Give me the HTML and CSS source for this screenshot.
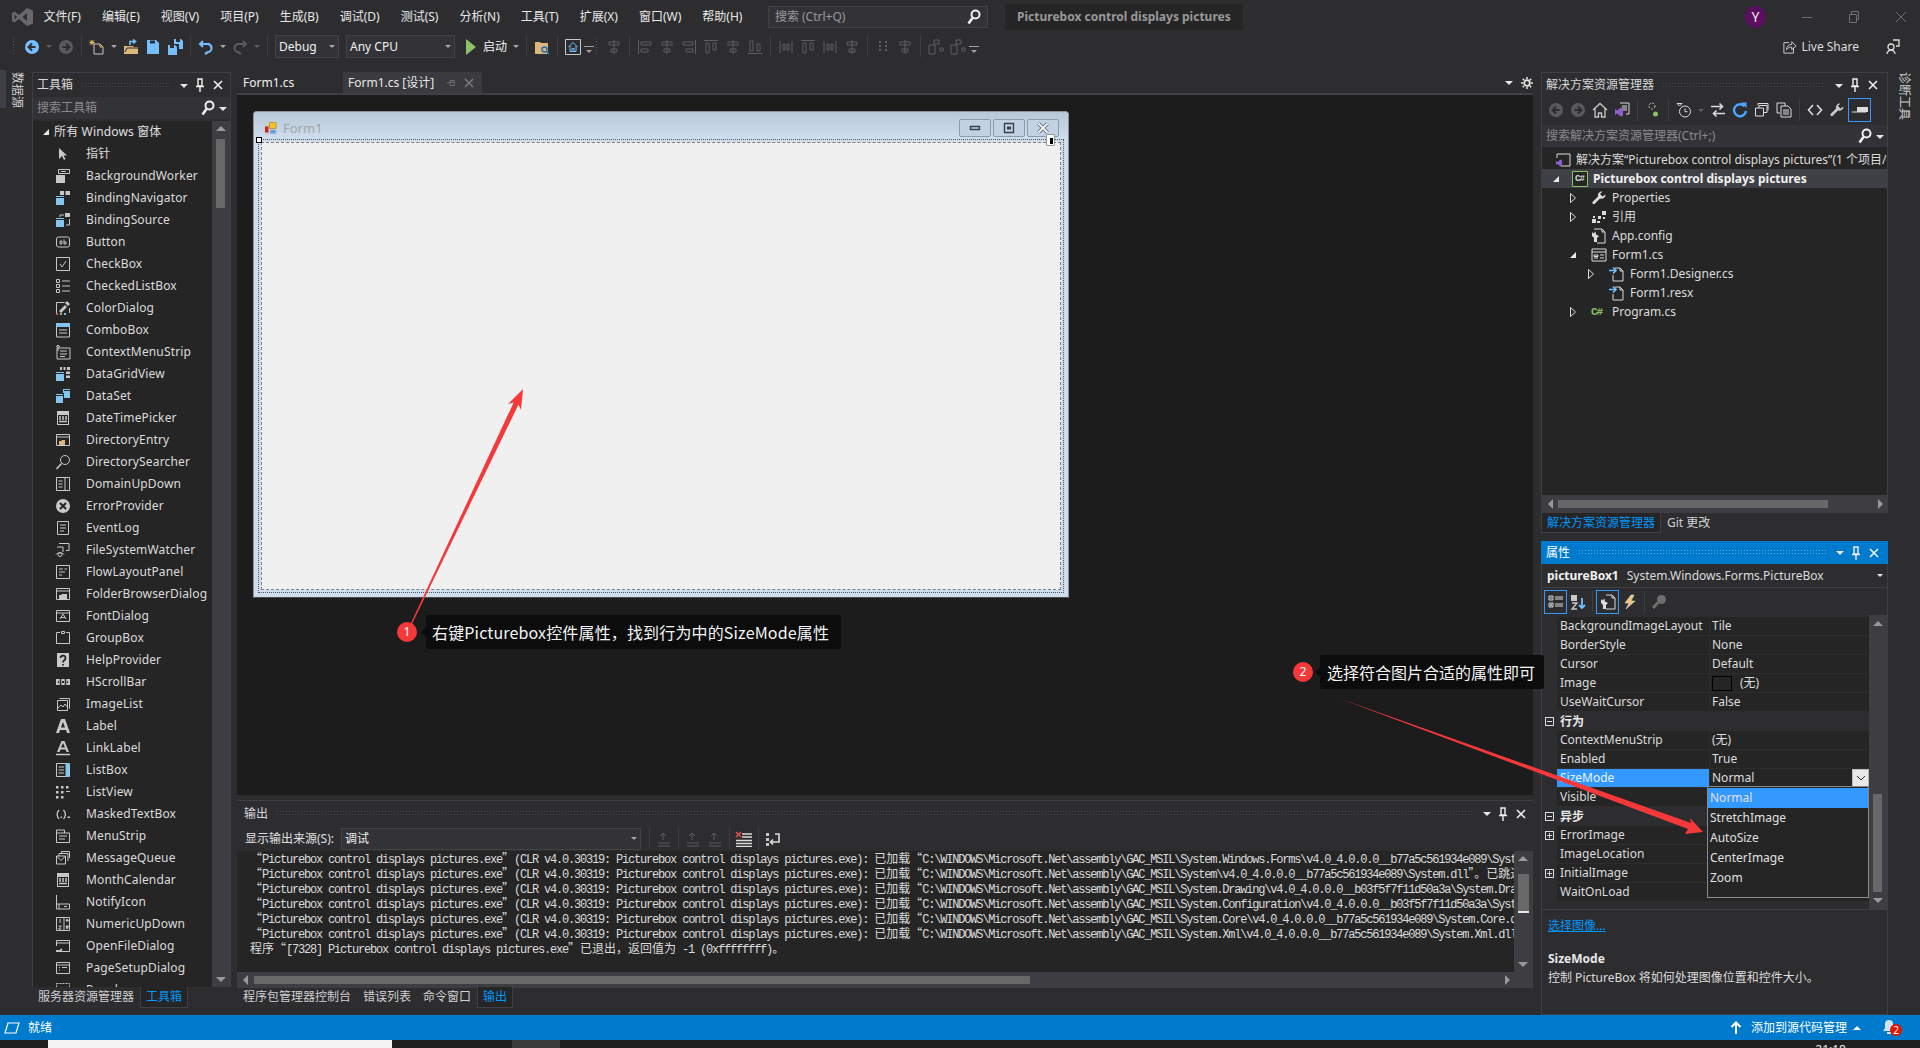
FILE: index.html
```html
<!DOCTYPE html>
<html lang="zh-CN">
<head>
  <meta charset="UTF-8"/>
  <title>Picturebox control displays pictures</title>
  <link rel="stylesheet" href="styles.css">
</head>
<body>
  <svg class="sprites" width="0" height="0">
    <!-- toolbar -->
    <symbol id="back" viewBox="0 0 16 16"><circle cx="8" cy="8" r="7" fill="currentColor" stroke="none"/><path d="M11.500 8H5M8 4.500 4.500 8 8 11.500" stroke="#2d2d30" stroke-width="2"/></symbol>
    <symbol id="fwd" viewBox="0 0 16 16"><circle cx="8" cy="8" r="7" fill="currentColor" stroke="none"/><path d="M4.500 8H11M8 4.500 11.500 8 8 11.500" stroke="#2d2d30" stroke-width="2"/></symbol>
    <symbol id="newp" viewBox="0 0 16 16"><path d="M5 5h6l3 3v7H5z"/><path d="M11 5v3h3M3 1v5M.5 3.500h5M1 1.500l4 4M5 1.500l-4 4" stroke="#e8c060" stroke-width="1"/></symbol>
    <symbol id="open" viewBox="0 0 16 16"><path d="M1 7h9l1 1h4v7H1z" fill="#dcb67a" stroke="none"/><path d="M2 13l2-4h11" stroke="#2d2d30"/><path d="M7 6V2.500h5M10 .5l2.500 2L10 4.500" stroke="#75bfff" stroke-width="1.600"/></symbol>
    <symbol id="save" viewBox="0 0 16 16"><path d="M2 1h9v4H5V1 1h6l3 3v11H2z" fill="#75bfff" stroke="none"/><path d="M5 1.500h5v3H5z" fill="#2d2d30" stroke="none"/></symbol>
    <symbol id="saveall" viewBox="0 0 16 16"><path d="M7 0h7l2 2v8h-4V5H7z" fill="#75bfff" stroke="none"/><path d="M1 6h7l2 2v8H1z" fill="#75bfff" stroke="none"/><path d="M3 6h4v3H3zM9 0h4v3H9z" fill="#2d2d30" stroke="none"/></symbol>
    <symbol id="undo" viewBox="0 0 16 16"><path d="M5 2l-3 3 3 3" stroke="currentColor" stroke-width="2"/><path d="M2.500 5H9a4 4 0 0 1 1 8l-3 2" stroke="currentColor" stroke-width="2.200"/></symbol>
    <symbol id="redo" viewBox="0 0 16 16"><path d="M11 2l3 3-3 3" stroke="currentColor" stroke-width="2"/><path d="M13.500 5H7a4 4 0 0 0-1 8l3 2" stroke="currentColor" stroke-width="2.200"/></symbol>
    <symbol id="play" viewBox="0 0 16 16"><path d="M3 0l10 8-10 8z" fill="currentColor" stroke="none"/></symbol>
    <symbol id="findf" viewBox="0 0 16 16"><path d="M1 3h5l1 1h7v11H1z" fill="#dcb67a" stroke="none"/><circle cx="10.500" cy="10.500" r="2.500" stroke="#1b6fb5" stroke-width="1.400"/><path d="M12.500 12.500 15 15" stroke="#1b6fb5" stroke-width="1.500"/></symbol>
    <symbol id="homeb" viewBox="0 0 16 16"><path d="M.5.5h15v15H.5z" stroke="#c8c8c8"/><path d="M3.500 8 8 3.500 12.500 8M5 7v5.500h6V7M7 12.500V9.500h2v3" stroke="#75bfff"/></symbol>
    <symbol id="alignl" viewBox="0 0 16 16"><path d="M1.500 1v14M4 3h10v3H4zM4 10h7v3H4z"/></symbol>
    <symbol id="alignc" viewBox="0 0 16 16"><path d="M8 1v14M3 3h10v3H3zM5 10h6v3H5z"/></symbol>
    <symbol id="alignt" viewBox="0 0 16 16"><path d="M1 1.500h14M3 4v10h3V4zM10 4v7h3V4z"/></symbol>
    <symbol id="spacer" viewBox="0 0 16 16"><path d="M2 2v12M14 2v12M5 5h2v6H5zM9 5h2v6H9z"/></symbol>
    <symbol id="vdots" viewBox="0 0 16 16"><path d="M5 2v12M11 2v12" stroke-dasharray="2 2" stroke-width="2"/></symbol>
    <symbol id="order" viewBox="0 0 16 16"><path d="M1 6h6v9H1zM6 1h5v4H6zM12 9h3v3h-3z"/></symbol>
    <!-- window / panel chrome -->
    <symbol id="pin" viewBox="0 0 10 14"><path d="M3 1h4v7H3zM1 8.500h8M5 9v5M7 1v7" stroke="currentColor" stroke-width="1.400"/></symbol>
    <symbol id="closex" viewBox="0 0 10 10"><path d="M1 1l8 8M9 1 1 9" stroke="currentColor" stroke-width="1.600"/></symbol>
    <symbol id="magn" viewBox="0 0 14 16"><circle cx="8.500" cy="5.500" r="4" stroke="currentColor" stroke-width="2"/><path d="M5.500 9 1.500 14.500" stroke="currentColor" stroke-width="2.600"/></symbol>
    <symbol id="gear" viewBox="0 0 12 12"><circle cx="6" cy="6" r="2.800" stroke="currentColor" stroke-width="1.800"/><path d="M6 0v2M6 10v2M0 6h2M10 6h2M1.800 1.800l1.400 1.400M8.800 8.800l1.400 1.400M1.800 10.200l1.400-1.400M8.800 3.200l1.400-1.400" stroke="currentColor" stroke-width="1.500"/></symbol>
    <symbol id="wrench" viewBox="0 0 16 16"><path d="M14.500 4.500a4 4 0 0 1-5.500 4L3.500 14a1.500 1.500 0 0 1-2-2L7 6.500A4 4 0 0 1 11.500 1.500L9 4l2.500 2.500z" fill="currentColor" stroke="none"/></symbol>
    <symbol id="home" viewBox="0 0 16 16"><path d="M1 8l7-6.500L15 8M3 6.500V15h3.500v-4h3v4H13V6.500" stroke="currentColor" stroke-width="1.300"/></symbol>
    <symbol id="vsfile" viewBox="0 0 16 16"><path d="M6 1h9v11h-3M8 4h5M8 6h5M8 8h5" stroke="#dcdcdc"/><path d="M1 7l2 1.500L7 5.500l2 1v7l-2 1-4-3-2 1.500z" fill="#8f5fd0" stroke="none"/></symbol>
    <symbol id="pending" viewBox="0 0 16 16"><circle cx="7" cy="4" r="3" stroke="#c8c8c8" stroke-dasharray="2 1.500"/><circle cx="10.500" cy="12" r="2.500" fill="#8cc265" stroke="none"/></symbol>
    <symbol id="clock" viewBox="0 0 16 16"><circle cx="9" cy="9.500" r="5.500" stroke="#dcdcdc"/><path d="M9 6.500v3.200h2.500M1 1.500h5L3.500 4z" stroke="#dcdcdc"/></symbol>
    <symbol id="sync" viewBox="0 0 16 16"><path d="M1 4.500h11M9.500 1.500l3 3-3 3M15 11.500H4M6.500 8.500l-3 3 3 3" stroke="#dcdcdc" stroke-width="1.600"/></symbol>
    <symbol id="refresh" viewBox="0 0 16 16"><path d="M12.500 4.200A6 6 0 1 0 14 9" stroke="#4da6ff" stroke-width="2.400"/><path d="M9 .5h5.500V6z" fill="#4da6ff" stroke="none"/></symbol>
    <symbol id="copies" viewBox="0 0 16 16"><path d="M1.500 6h8v8h-8zM5 6V3.500h8v7h-3.500M4 3.500V1.500h10v7" stroke="#dcdcdc"/></symbol>
    <symbol id="pages" viewBox="0 0 16 16"><path d="M1 1h8v3M1 1v10h3M5 4h7l3 3v8H5zM7 8h6M7 10h6M7 12h6" stroke="#dcdcdc"/></symbol>
    <symbol id="code" viewBox="0 0 16 16"><path d="M6 3 1.500 8 6 13M10 3l4.500 5L10 13" stroke="#dcdcdc" stroke-width="1.600"/></symbol>
    <symbol id="collapse" viewBox="0 0 16 16"><path d="M0 10h14" stroke="#dcdcdc" stroke-width="1"/><path d="M5 5h11v5H5z" fill="#dcdcdc" stroke="none"/></symbol>
    <symbol id="tri-r" viewBox="0 0 6 10"><path d="M.5.5l5 4.500-5 4.500z" stroke="#dcdcdc"/></symbol>
    <symbol id="slnfile" viewBox="0 0 16 16"><path d="M2 2h13v12H6M2 2v4" stroke="#dcdcdc"/><path d="M1 9l1.500 1 3-2.500 1.500.7v5.600l-1.500.7-3-2.500-1.500 1z" fill="#8f5fd0" stroke="none"/></symbol>
    <symbol id="csproj" viewBox="0 0 16 16"><path d="M.5.5h15v15H.5z" stroke="#8cc265" fill="#252526"/></symbol>
    <symbol id="refs" viewBox="0 0 16 16"><path d="M1 10h4v4H1zM7 7h3v3H7zM11 2h4v4h-4zM6 12h3v2H6zM2 7h2v2H2zM12 8h2v2h-2z" fill="#dcdcdc" stroke="none"/></symbol>
    <symbol id="config" viewBox="0 0 16 16"><path d="M3 1h8l3 3v11H6M11 1v3h3" stroke="#dcdcdc"/><path d="M1 4l1.500 1.500L4.500 3.500 5 6.500 8 8 6 10v4H3v-4L1 8z" fill="#dcdcdc" stroke="none"/></symbol>
    <symbol id="formf" viewBox="0 0 16 16"><path d="M1 2h14v12H1zM1 5h14M3 8h4v1.500H3zM3 11h4M9 8h4M9 11h4" stroke="#dcdcdc"/></symbol>
    <symbol id="dep" viewBox="0 0 16 16"><path d="M6 2h5l3 3v10H4V9M11 2v3h3" stroke="#dcdcdc"/><path d="M0 4.500h6M4 1.500l3 3-3 3" stroke="#75bfff" stroke-width="1.600"/></symbol>
    <symbol id="cat" viewBox="0 0 16 16"><path d="M1 2h4v4H1zM1 9h4v4H1zM7 3h8M7 5h8M7 10h8M7 12h8M2 4h2M2 11h2M3 10v2" stroke="#dcdcdc"/></symbol>
    <symbol id="az" viewBox="0 0 16 16"><path d="M1 1h6v6H1z" fill="#c8c8c8" stroke="none"/><path d="M2 9h5l-5 6h5" stroke="#c8c8c8" stroke-width="1.400"/><path d="M12 4v10M9 11l3 3 3-3" stroke="#75bfff" stroke-width="1.800"/></symbol>
    <symbol id="propf" viewBox="0 0 16 16"><path d="M6 1h6l3 3v11H6M12 1v3h3" stroke="#dcdcdc"/><path d="M1 5l1.500 1.500 2-2L5 7.500 8 9 6 11v4H3v-4L1 9z" fill="#dcdcdc" stroke="none"/></symbol>
    <symbol id="bolt" viewBox="0 0 16 16"><path d="M9 1 3 9h4l-3 6 9-8H9l3-6z" fill="#f2c27b" stroke="#dcdcdc" stroke-width=".6"/></symbol>
    <symbol id="key" viewBox="0 0 16 16"><circle cx="10.500" cy="5.500" r="4.500" fill="#6e6e6e" stroke="none"/><path d="M7.500 8 2 14" stroke="#6e6e6e" stroke-width="3"/></symbol>
    <symbol id="livesh" viewBox="0 0 16 16"><path d="M1 3h6M1 3v12h11V9" stroke="currentColor"/><path d="M4 11c0-4 3-6 6-6V2l5 5-5 4V8c-3 0-4 1-6 3z" stroke="currentColor"/></symbol>
    <symbol id="feedb" viewBox="0 0 16 16"><circle cx="7" cy="8" r="3" stroke="currentColor" stroke-width="1.300"/><path d="M3 15c0-2 2-4 4-4s4 2 4 4M9 1h6v6h-3" stroke="currentColor" stroke-width="1.300"/></symbol>
    <symbol id="clearout" viewBox="0 0 16 16"><path d="M6 3h10M6 6h10M0 9.500h16M0 12.500h16M0 15.500h16" stroke="#dcdcdc" stroke-width="1.500"/><path d="M0 1l5 5M5 1 0 6" stroke="#e05252" stroke-width="1.600"/></symbol>
    <symbol id="wrap" viewBox="0 0 16 16"><path d="M10 3h4v8H6M8 8.500 5.500 11 8 13.500" stroke="#dcdcdc" stroke-width="1.600"/><path d="M1 2h3v3H1zM1 7h3v3H1zM1 12h3v3H1z" fill="#c8c8c8" stroke="none"/></symbol>
    <symbol id="jump" viewBox="0 0 16 16"><path d="M2 15h12M2 12h12M7 9V2M4 5l3-3 3 3" stroke="currentColor"/></symbol>
    <!-- toolbox -->
    <symbol id="t-ptr" viewBox="0 0 16 16"><path d="M4 2v11l3-3 2 4 1.500-1-2-3.500H12z" fill="#c8c8c8" stroke="none"/></symbol>
    <symbol id="t-bgw" viewBox="0 0 16 16"><path d="M1 7h9v8H1z" fill="#c8c8c8" stroke="none"/><path d="M3.500 1.500h11v4h-11z"/><path d="M6 3.500h5"/></symbol>
    <symbol id="t-bnav" viewBox="0 0 16 16"><path d="M1 6h8v9H1z" fill="#83c5ed" stroke="none"/><path d="M1 7.500h8" stroke="#252526"/><path d="M5 1h4v4H5zM10.500 1h4.500v4h-4.500z" fill="#c8c8c8" stroke="none"/></symbol>
    <symbol id="t-bsrc" viewBox="0 0 16 16"><path d="M1 6h8v9H1z" fill="#83c5ed" stroke="none"/><path d="M1 7.500h8" stroke="#252526"/><path d="M10 1h5v4h-5z" fill="#c8c8c8" stroke="none"/><path d="M14.500 7v6H11M5 5V3h4"/></symbol>
    <symbol id="t-btn" viewBox="0 0 16 16"><rect x="1.500" y="3" width="13" height="10" rx="2"/><path d="M5 7h2v3H5zM9 5.500V10h2V8H9"/></symbol>
    <symbol id="t-chk" viewBox="0 0 16 16"><path d="M1.500 1.500h13v13h-13z"/><path d="M5 8l2 3 4-6"/></symbol>
    <symbol id="t-clb" viewBox="0 0 16 16"><path d="M1.500 1.500h3v3h-3zM1.500 6.500h3v3h-3zM1.500 11.500h3v3h-3zM7 3h8M7 8h8M7 13h8"/></symbol>
    <symbol id="t-color" viewBox="0 0 16 16"><path d="M1.500 13V2.500h8M14.500 8v5" /><path d="M4 11l6-6 2 2-6 6zM10 3l3 3 2-2-3-3z" fill="#c8c8c8" stroke="none"/><path d="M1 14h2" stroke="#e05252" stroke-width="2"/><path d="M5 14h2" stroke="#8cc265" stroke-width="2"/><path d="M9 14h2" stroke="#75bfff" stroke-width="2"/></symbol>
    <symbol id="t-combo" viewBox="0 0 16 16"><path d="M1 1h14v4H1z" fill="#83c5ed" stroke="none"/><path d="M1.500 5v10h13V5M4 8h8M4 11h8"/></symbol>
    <symbol id="t-ctx" viewBox="0 0 16 16"><path d="M2 4h13v11H2zM5 7h7M5 10h7M5 12.500h5"/><path d="M3 1v6M1 3l2-2 2 2" stroke="#c8c8c8"/></symbol>
    <symbol id="t-dgv" viewBox="0 0 16 16"><path d="M1 6h8v9H1z" fill="#83c5ed" stroke="none"/><path d="M1 7.500h8" stroke="#252526"/><path d="M5 1h2v3H5zM8.500 1h2v3h-2zM12 1h3v3h-3zM11 5.500h4V8h-4zM11 9.500h4V12h-4z" fill="#c8c8c8" stroke="none"/></symbol>
    <symbol id="t-ds" viewBox="0 0 16 16"><path d="M8 1h7v9H9V5H8z" fill="#83c5ed" stroke="none"/><path d="M1 6h7v9H1z" fill="#83c5ed" stroke="none"/><path d="M1 7.500h7M9 2.500h6" stroke="#252526"/></symbol>
    <symbol id="t-date" viewBox="0 0 16 16"><path d="M2 1h12v14H2z" stroke="none" fill="#c8c8c8"/><path d="M3 5h10v9H3z" fill="#252526" stroke="none"/><path d="M4 7h2M7 7h2M10 7h2M4 9h2M7 9h2M10 9h2M4 11.500h8" stroke-width="1.300"/></symbol>
    <symbol id="t-dir" viewBox="0 0 16 16"><path d="M1.500 2.500h13v11h-13zM1.500 5h13"/><path d="M4 9h2l1-1h3v5H4z" fill="#dcb67a" stroke="none"/></symbol>
    <symbol id="t-srch" viewBox="0 0 16 16"><circle cx="10" cy="6" r="4.500"/><path d="M6.500 9.500 1.500 15" stroke-width="1.600"/></symbol>
    <symbol id="t-dud" viewBox="0 0 16 16"><path d="M1.500 1.500h13v13h-13zM10 1.500v13"/><path d="M3.500 5h4M3.500 8h4M3.500 11h4"/></symbol>
    <symbol id="t-err" viewBox="0 0 16 16"><circle cx="8" cy="8" r="7" fill="#c8c8c8" stroke="none"/><path d="M5 5l6 6M11 5l-6 6" stroke="#252526" stroke-width="2"/></symbol>
    <symbol id="t-evt" viewBox="0 0 16 16"><path d="M2.500 1.500h11v13h-11zM5 5h6M5 8h6M5 11h4"/></symbol>
    <symbol id="t-fsw" viewBox="0 0 16 16"><path d="M4 1.500h10v7h-3M2 5h6v5"/><circle cx="5" cy="12.500" r="2" /><path d="M1 12.500c1-2 7-2 8 0" /></symbol>
    <symbol id="t-flow" viewBox="0 0 16 16"><path d="M1.500 1.500h13v13h-13zM4 5h4M9.500 5H12M4 8h6M4 11h3"/></symbol>
    <symbol id="t-fbd" viewBox="0 0 16 16"><path d="M1.500 2.500h13v11h-13zM1.500 5h13"/><path d="M4 9h2l1-1h5v5H4z" fill="#c8c8c8" stroke="none"/></symbol>
    <symbol id="t-font" viewBox="0 0 16 16"><path d="M1.500 2.500h13v11h-13zM1.500 5h13M5 11l3-5 3 5M6 9.500h4"/></symbol>
    <symbol id="t-grp" viewBox="0 0 16 16"><path d="M5 2.500H1.500v11h13v-11H11M6.500 1.500h3v2h-3z"/></symbol>
    <symbol id="t-help" viewBox="0 0 16 16"><path d="M2 1h12v14H2z" fill="#c8c8c8" stroke="none"/><path d="M5.500 6a2.500 2.500 0 1 1 3.800 2.200C8.500 8.700 8 9 8 10.500M8 12v1.500" stroke="#252526" stroke-width="1.800"/></symbol>
    <symbol id="t-hsb" viewBox="0 0 16 16"><path d="M1 5h14v6H1z" fill="#c8c8c8" stroke="none"/><path d="M5.500 5v6M10.500 5v6" stroke="#252526" stroke-width="1.500"/><path d="M4 6.500v3L2.500 8zM12 6.500v3L13.500 8zM7 7h2v2H7z" fill="#252526" stroke="none"/></symbol>
    <symbol id="t-img" viewBox="0 0 16 16"><path d="M2.500 4.500h10v10h-10zM4.500 2.500h10v10M3 12l3-3 2 2 2-3 2.500 3"/></symbol>
    <symbol id="t-lbl" viewBox="0 0 16 16"><path d="M1 15 6 1h4l5 14h-3l-1-3H5l-1 3zM6 9.500h4L8 4z" fill="#c8c8c8" stroke="none" fill-rule="evenodd"/></symbol>
    <symbol id="t-lnk" viewBox="0 0 16 16"><path d="M2 12 6.500 1h3L14 12h-2.500l-1-2.500h-5L4.500 12zM6 7.500h4L8 3z" fill="#c8c8c8" stroke="none" fill-rule="evenodd"/><path d="M1 14.500h14" stroke-width="1.500"/></symbol>
    <symbol id="t-lb" viewBox="0 0 16 16"><path d="M1.500 1.500h13v13h-13zM3.500 5H9M3.500 8H9M3.500 11H9"/><path d="M10.500 1h4v14h-4z" fill="#83c5ed" stroke="none"/></symbol>
    <symbol id="t-lv" viewBox="0 0 16 16"><path d="M1 2h2.500v2.500H1zM6 2h2.500v2.500H6zM11 2h2.500v2.500H11zM1 7h2.500v2.500H1zM6 7h2.500v2.500H6zM1 12h2.500v2.500H1zM6 12h2.500v2.500H6zM11 7h4v1h-4z" fill="#c8c8c8" stroke="none"/></symbol>
    <symbol id="t-mask" viewBox="0 0 16 16"><path d="M4 4C1.500 7 1.500 10 4 13M8.500 4c2.500 3 2.500 6 0 9" stroke-width="1.300"/><path d="M5.500 10.500h1.500V12H5.500zM12.500 10.500H15V12h-2.500z" fill="#c8c8c8" stroke="none"/></symbol>
    <symbol id="t-menu" viewBox="0 0 16 16"><path d="M1.500 2h8v3h5v9.500h-13zM1.500 5h8M4 8h8M4 11h6"/></symbol>
    <symbol id="t-msg" viewBox="0 0 16 16"><path d="M1.500 6h9v8h-9zM1.500 6 6 10.500 10.500 6M4 6V3.500h9V11M6.500 3.500V1.500h8V8"/></symbol>
    <symbol id="t-ntf" viewBox="0 0 16 16"><path d="M1.500 1v14h13v-5h-13M4 10v5M9 12.500h3"/></symbol>
    <symbol id="t-num" viewBox="0 0 16 16"><path d="M1.500 1.500h13v13h-13zM9 1.500v13"/><path d="M11 5h2.500L12 3zM11 10h2.500L12 13z" fill="#c8c8c8" stroke="#c8c8c8"/><path d="M5 3v4M3.500 10h3l-3 3h3"/></symbol>
    <symbol id="t-ofd" viewBox="0 0 16 16"><path d="M1.500 2.500h13v11H5M1.500 2.500V8M1.500 5h13"/><path d="M1 12h4l1-2 1.500 2L5 14H1z" fill="#c8c8c8" stroke="none"/></symbol>
    <symbol id="t-psd" viewBox="0 0 16 16"><path d="M1.500 2.500h13v11h-13zM1.500 5h13M4 7.500h1M7 7.500h5M4 10h1"/></symbol>
    <symbol id="t-panel" viewBox="0 0 16 16"><path d="M1.500 1.500h13v13h-13z" stroke-dasharray="2 1"/></symbol>
    <!-- solution/form chrome -->
    <symbol id="formico" viewBox="0 0 14 14"><path d="M.5.5h13v13H.5z" fill="#c9ccd1" stroke="none"/><path d="M5.500 1.500h6.500v6H5.500z" fill="#f3c32c" stroke="#a97a10" stroke-width=".6"/><path d="M1 5.500h3.500v6H1z" fill="#c8281c" stroke="none"/><path d="M6.500 9h5v3.500h-5z" fill="#5f9be0" stroke="none"/></symbol>
  </svg>

  <header class="titlebar">
    <svg class="vslogo" viewBox="0 0 21 18"><path fill-rule="evenodd" d="M15 0 21 2.500V15.500L15 18 7 11 2.500 14.500 0 13V5L2.500 3.500 7 7ZM15 5 10.500 9 15 13ZM2.500 6.500V11.500L5 9Z"/></svg>
    <nav class="menu">
      <span>文件(F)</span><span>编辑(E)</span><span>视图(V)</span><span>项目(P)</span><span>生成(B)</span><span>调试(D)</span>
      <span>测试(S)</span><span>分析(N)</span><span>工具(T)</span><span>扩展(X)</span><span>窗口(W)</span><span>帮助(H)</span>
    </nav>
    <div class="quick">
      <span>搜索 (Ctrl+Q)</span>
      <svg class="i16 white"><use href="#magn"/></svg>
    </div>
    <div class="solname">Picturebox control displays pictures</div>
    <div class="avatar">Y</div>
    <div class="winctl">
      <svg viewBox="0 0 12 12"><path d="M1 6.500h10"/></svg>
      <svg viewBox="0 0 12 12"><path d="M1.500 3.500h7v8h-7zM3.500 3.500V.5h7v8H8.500"/></svg>
      <svg viewBox="0 0 12 12"><path d="M1 1l10 10M11 1 1 11"/></svg>
    </div>
  </header>

  <div class="toolbar">
    <span class="gripv"></span>
    <svg class="ic blue"><use href="#back"/></svg><b class="dd dim"></b>
    <svg class="ic faded"><use href="#fwd"/></svg><i class="sep"></i>
    <svg class="ic"><use href="#newp"/></svg><b class="dd"></b>
    <svg class="ic"><use href="#open"/></svg>
    <svg class="ic"><use href="#save"/></svg>
    <svg class="ic"><use href="#saveall"/></svg><i class="sep"></i>
    <svg class="ic blue"><use href="#undo"/></svg><b class="dd"></b>
    <svg class="ic faded"><use href="#redo"/></svg><b class="dd dim"></b><i class="sep"></i>
    <div class="combo debug"><span>Debug</span><b class="dd"></b></div>
    <div class="combo cpu"><span>Any CPU</span><b class="dd"></b></div>
    <svg class="ic green"><use href="#play"/></svg>
    <span class="runlbl">启动</span><b class="dd"></b><i class="sep"></i>
    <svg class="ic"><use href="#findf"/></svg><i class="sep"></i>
    <svg class="ic"><use href="#homeb"/></svg><b class="ddlow"></b>
    <span class="gripv small"></span>
    <svg class="ic off"><use href="#alignc"/></svg><i class="sep"></i>
    <svg class="ic off"><use href="#alignl"/></svg>
    <svg class="ic off"><use href="#alignc"/></svg>
    <svg class="ic off flip"><use href="#alignl"/></svg>
    <svg class="ic off"><use href="#alignt"/></svg>
    <svg class="ic off"><use href="#alignc"/></svg>
    <svg class="ic off flipv"><use href="#alignt"/></svg><i class="sep"></i>
    <svg class="ic off"><use href="#spacer"/></svg>
    <svg class="ic off"><use href="#alignt"/></svg>
    <svg class="ic off"><use href="#spacer"/></svg>
    <svg class="ic off"><use href="#alignc"/></svg><i class="sep"></i>
    <svg class="ic off"><use href="#vdots"/></svg>
    <svg class="ic off"><use href="#alignc"/></svg><i class="sep"></i>
    <svg class="ic off"><use href="#order"/></svg>
    <svg class="ic off"><use href="#order"/></svg><b class="ddlow"></b>
    <div class="liveshare">
      <svg class="i16"><use href="#livesh"/></svg><span>Live Share</span>
      <svg class="i16 feed"><use href="#feedb"/></svg>
    </div>
  </div>

  <main class="workspace">
    <aside class="strip strip-left"><span class="strip-mark"></span><span class="vtext">数据源</span></aside>

    <section class="toolbox">
      <div class="panel">
        <div class="ptitle"><span>工具箱</span><i class="dots"></i><b class="dd light"></b><svg class="pinic"><use href="#pin"/></svg><svg class="xic"><use href="#closex"/></svg></div>
        <div class="psearch"><span>搜索工具箱</span><svg class="i16 white"><use href="#magn"/></svg><b class="dd light"></b></div>
        <div class="tlist-wrap">
          <ul class="tlist">
            <li class="thead"><b class="tri"></b>所有 Windows 窗体</li>
            <li><svg class="ic16"><use href="#t-ptr"/></svg>指针</li>
            <li><svg class="ic16"><use href="#t-bgw"/></svg>BackgroundWorker</li>
            <li><svg class="ic16"><use href="#t-bnav"/></svg>BindingNavigator</li>
            <li><svg class="ic16"><use href="#t-bsrc"/></svg>BindingSource</li>
            <li><svg class="ic16"><use href="#t-btn"/></svg>Button</li>
            <li><svg class="ic16"><use href="#t-chk"/></svg>CheckBox</li>
            <li><svg class="ic16"><use href="#t-clb"/></svg>CheckedListBox</li>
            <li><svg class="ic16"><use href="#t-color"/></svg>ColorDialog</li>
            <li><svg class="ic16"><use href="#t-combo"/></svg>ComboBox</li>
            <li><svg class="ic16"><use href="#t-ctx"/></svg>ContextMenuStrip</li>
            <li><svg class="ic16"><use href="#t-dgv"/></svg>DataGridView</li>
            <li><svg class="ic16"><use href="#t-ds"/></svg>DataSet</li>
            <li><svg class="ic16"><use href="#t-date"/></svg>DateTimePicker</li>
            <li><svg class="ic16"><use href="#t-dir"/></svg>DirectoryEntry</li>
            <li><svg class="ic16"><use href="#t-srch"/></svg>DirectorySearcher</li>
            <li><svg class="ic16"><use href="#t-dud"/></svg>DomainUpDown</li>
            <li><svg class="ic16"><use href="#t-err"/></svg>ErrorProvider</li>
            <li><svg class="ic16"><use href="#t-evt"/></svg>EventLog</li>
            <li><svg class="ic16"><use href="#t-fsw"/></svg>FileSystemWatcher</li>
            <li><svg class="ic16"><use href="#t-flow"/></svg>FlowLayoutPanel</li>
            <li><svg class="ic16"><use href="#t-fbd"/></svg>FolderBrowserDialog</li>
            <li><svg class="ic16"><use href="#t-font"/></svg>FontDialog</li>
            <li><svg class="ic16"><use href="#t-grp"/></svg>GroupBox</li>
            <li><svg class="ic16"><use href="#t-help"/></svg>HelpProvider</li>
            <li><svg class="ic16"><use href="#t-hsb"/></svg>HScrollBar</li>
            <li><svg class="ic16"><use href="#t-img"/></svg>ImageList</li>
            <li><svg class="ic16"><use href="#t-lbl"/></svg>Label</li>
            <li><svg class="ic16"><use href="#t-lnk"/></svg>LinkLabel</li>
            <li><svg class="ic16"><use href="#t-lb"/></svg>ListBox</li>
            <li><svg class="ic16"><use href="#t-lv"/></svg>ListView</li>
            <li><svg class="ic16"><use href="#t-mask"/></svg>MaskedTextBox</li>
            <li><svg class="ic16"><use href="#t-menu"/></svg>MenuStrip</li>
            <li><svg class="ic16"><use href="#t-msg"/></svg>MessageQueue</li>
            <li><svg class="ic16"><use href="#t-date"/></svg>MonthCalendar</li>
            <li><svg class="ic16"><use href="#t-ntf"/></svg>NotifyIcon</li>
            <li><svg class="ic16"><use href="#t-num"/></svg>NumericUpDown</li>
            <li><svg class="ic16"><use href="#t-ofd"/></svg>OpenFileDialog</li>
            <li><svg class="ic16"><use href="#t-psd"/></svg>PageSetupDialog</li>
            <li><svg class="ic16"><use href="#t-panel"/></svg>Panel</li>
          </ul>
          <div class="vscroll tb-scroll"><b class="up"></b><i class="thumb"></i><b class="down"></b></div>
        </div>
      </div>
      <div class="dock-tabs"><span>服务器资源管理器</span><span class="on">工具箱</span></div>
    </section>

    <section class="center">
      <div class="doc-tabs">
        <span class="doc-tab">Form1.cs</span>
        <span class="doc-tab active">Form1.cs [设计]<svg class="tabpin" viewBox="0 0 12 12"><path d="M1 6h4M5 3h5v6H5zM5 5h5"/></svg><svg class="tabx" viewBox="0 0 10 10"><use href="#closex"/></svg></span>
        <span class="doc-right"><b class="dd light"></b><svg class="gearic"><use href="#gear"/></svg></span>
      </div>
      <div class="surface">
        <div class="form">
          <div class="form-title">
            <svg class="formico"><use href="#formico"/></svg>
            <span>Form1</span>
            <div class="form-btns">
              <span><svg viewBox="0 0 12 8"><path d="M1.500 2.500h9v3h-9z"/></svg></span>
              <span><svg viewBox="0 0 12 12"><path d="M1.500 1.500h9v9h-9z"/><path d="M4 4.500h4v3H4z" fill="#3a4048" stroke="none"/></svg></span>
              <span><svg viewBox="0 0 12 12"><path class="xout" d="M1.500 1.500 10.500 10.500M10.500 1.500 1.500 10.500"/><path class="xin" d="M1.500 1.500 10.500 10.500M10.500 1.500 1.500 10.500"/></svg></span>
            </div>
          </div>
          <div class="form-sel">
            <div class="form-client"></div>
            <i class="handle"></i>
            <i class="smart"></i>
          </div>
        </div>
      </div>
      <div class="output">
        <div class="ptitle out-title"><span>输出</span><i class="dots"></i><b class="dd light"></b><svg class="pinic"><use href="#pin"/></svg><svg class="xic"><use href="#closex"/></svg></div>
        <div class="out-tools">
          <span class="out-lbl">显示输出来源(S):</span>
          <div class="combo out-src"><span>调试</span><b class="dd"></b></div>
          <i class="sep"></i>
          <svg class="ic off"><use href="#jump"/></svg><i class="sep"></i>
          <svg class="ic off"><use href="#jump"/></svg>
          <svg class="ic off"><use href="#jump"/></svg><i class="sep"></i>
          <svg class="ic"><use href="#clearout"/></svg><i class="sep"></i>
          <svg class="ic"><use href="#wrap"/></svg>
        </div>
        <div class="out-body">
          <div class="out-text">
            <div class="ln"><i class="c">“</i>Picturebox control displays pictures.exe<i class="c">”</i>(CLR v4.0.30319: Picturebox control displays pictures.exe): <i class="c">已加载“</i>C:\WINDOWS\Microsoft.Net\assembly\GAC_MSIL\System.Windows.Forms\v4.0_4.0.0.0__b77a5c561934e089\System.Windows.Forms.dll</div>
            <div class="ln"><i class="c">“</i>Picturebox control displays pictures.exe<i class="c">”</i>(CLR v4.0.30319: Picturebox control displays pictures.exe): <i class="c">已加载“</i>C:\WINDOWS\Microsoft.Net\assembly\GAC_MSIL\System\v4.0_4.0.0.0__b77a5c561934e089\System.dll<i class="c">”。已跳过</i></div>
            <div class="ln"><i class="c">“</i>Picturebox control displays pictures.exe<i class="c">”</i>(CLR v4.0.30319: Picturebox control displays pictures.exe): <i class="c">已加载“</i>C:\WINDOWS\Microsoft.Net\assembly\GAC_MSIL\System.Drawing\v4.0_4.0.0.0__b03f5f7f11d50a3a\System.Drawing.dll</div>
            <div class="ln"><i class="c">“</i>Picturebox control displays pictures.exe<i class="c">”</i>(CLR v4.0.30319: Picturebox control displays pictures.exe): <i class="c">已加载“</i>C:\WINDOWS\Microsoft.Net\assembly\GAC_MSIL\System.Configuration\v4.0_4.0.0.0__b03f5f7f11d50a3a\System.Configuration.dll</div>
            <div class="ln"><i class="c">“</i>Picturebox control displays pictures.exe<i class="c">”</i>(CLR v4.0.30319: Picturebox control displays pictures.exe): <i class="c">已加载“</i>C:\WINDOWS\Microsoft.Net\assembly\GAC_MSIL\System.Core\v4.0_4.0.0.0__b77a5c561934e089\System.Core.dll</div>
            <div class="ln"><i class="c">“</i>Picturebox control displays pictures.exe<i class="c">”</i>(CLR v4.0.30319: Picturebox control displays pictures.exe): <i class="c">已加载“</i>C:\WINDOWS\Microsoft.Net\assembly\GAC_MSIL\System.Xml\v4.0_4.0.0.0__b77a5c561934e089\System.Xml.dll</div>
            <div class="ln"><i class="c">程序“</i>[7328] Picturebox control displays pictures.exe<i class="c">”已退出，返回值为</i> -1 (0xffffffff)<i class="c">。</i></div>
          </div>
          <div class="vscroll out-scroll"><b class="up"></b><i class="thumb"></i><b class="down"></b></div>
        </div>
        <div class="hscroll out-h"><b class="left"></b><div class="track"><i class="thumb"></i></div><b class="right"></b></div>
      </div>
      <div class="dock-tabs"><span>程序包管理器控制台</span><span>错误列表</span><span>命令窗口</span><span class="on">输出</span></div>
    </section>

    <section class="rightcol">
      <div class="panel se">
        <div class="ptitle"><span>解决方案资源管理器</span><i class="dots"></i><b class="dd light"></b><svg class="pinic"><use href="#pin"/></svg><svg class="xic"><use href="#closex"/></svg></div>
        <div class="se-tools">
          <svg class="ic faded"><use href="#back"/></svg>
          <svg class="ic faded"><use href="#fwd"/></svg>
          <svg class="ic white"><use href="#home"/></svg>
          <svg class="ic"><use href="#vsfile"/></svg><i class="sep"></i>
          <svg class="ic"><use href="#pending"/></svg><i class="sep"></i>
          <svg class="ic"><use href="#clock"/></svg><b class="dd dim"></b>
          <svg class="ic"><use href="#sync"/></svg>
          <svg class="ic"><use href="#refresh"/></svg>
          <svg class="ic"><use href="#copies"/></svg>
          <svg class="ic"><use href="#pages"/></svg><i class="sep"></i>
          <svg class="ic"><use href="#code"/></svg>
          <svg class="ic white"><use href="#wrench"/></svg>
          <span class="boxed"><svg class="ic"><use href="#collapse"/></svg></span>
        </div>
        <div class="psearch se-search"><span>搜索解决方案资源管理器(Ctrl+;)</span><svg class="i16 white"><use href="#magn"/></svg><b class="dd light"></b></div>
        <div class="tree">
          <div class="node l1"><svg class="nic"><use href="#slnfile"/></svg><span>解决方案“Picturebox control displays pictures”(1 个项目/共 1 个)</span></div>
          <div class="node l1 sel"><b class="tri"></b><svg class="nic"><use href="#csproj"/></svg><em class="cs">C#</em><span>Picturebox control displays pictures</span></div>
          <div class="node l2"><svg class="exp"><use href="#tri-r"/></svg><svg class="nic white"><use href="#wrench"/></svg><span>Properties</span></div>
          <div class="node l2"><svg class="exp"><use href="#tri-r"/></svg><svg class="nic"><use href="#refs"/></svg><span>引用</span></div>
          <div class="node l2"><svg class="nic"><use href="#config"/></svg><span>App.config</span></div>
          <div class="node l2"><b class="tri"></b><svg class="nic"><use href="#formf"/></svg><span>Form1.cs</span></div>
          <div class="node l3"><svg class="exp"><use href="#tri-r"/></svg><svg class="nic"><use href="#dep"/></svg><span>Form1.Designer.cs</span></div>
          <div class="node l3"><svg class="nic"><use href="#dep"/></svg><span>Form1.resx</span></div>
          <div class="node l2"><svg class="exp"><use href="#tri-r"/></svg><em class="cs plain">C#</em><span>Program.cs</span></div>
        </div>
        <div class="hscroll se-h"><b class="left"></b><div class="track"><i class="thumb"></i></div><b class="right"></b></div>
      </div>
      <div class="dock-tabs se-tabs"><span class="on">解决方案资源管理器</span><span>Git 更改</span></div>

      <div class="props">
        <div class="ptitle props-title"><span>属性</span><i class="dots"></i><b class="dd light"></b><svg class="pinic"><use href="#pin"/></svg><svg class="xic"><use href="#closex"/></svg></div>
        <div class="props-obj"><strong>pictureBox1</strong><span>System.Windows.Forms.PictureBox</span><b class="dd light"></b></div>
        <div class="props-tools">
          <span class="boxed"><svg class="ic"><use href="#cat"/></svg></span>
          <svg class="ic"><use href="#az"/></svg><i class="sep"></i>
          <span class="boxed"><svg class="ic"><use href="#propf"/></svg></span>
          <svg class="ic"><use href="#bolt"/></svg><i class="sep"></i>
          <svg class="ic"><use href="#key"/></svg>
        </div>
        <div class="pgrid-wrap">
          <div class="pgrid">
            <div class="row"><span>BackgroundImageLayout</span><span>Tile</span></div>
            <div class="row"><span>BorderStyle</span><span>None</span></div>
            <div class="row"><span>Cursor</span><span>Default</span></div>
            <div class="row"><span>Image</span><span class="imgval"><i class="swatch"></i>(无)</span></div>
            <div class="row"><span>UseWaitCursor</span><span>False</span></div>
            <div class="group"><i class="pm minus"></i>行为</div>
            <div class="row"><span>ContextMenuStrip</span><span>(无)</span></div>
            <div class="row"><span>Enabled</span><span>True</span></div>
            <div class="row sel"><span>SizeMode</span><span>Normal</span><i class="combo-btn"><svg viewBox="0 0 10 6"><path d="M1 1l4 4 4-4"/></svg></i></div>
            <div class="row"><span>Visible</span><span></span></div>
            <div class="group"><i class="pm minus"></i>异步</div>
            <div class="row"><i class="pm plus"></i><span>ErrorImage</span><span></span></div>
            <div class="row"><span>ImageLocation</span><span></span></div>
            <div class="row"><i class="pm plus"></i><span>InitialImage</span><span></span></div>
            <div class="row"><span>WaitOnLoad</span><span></span></div>
            <ul class="dropdown">
              <li class="on">Normal</li>
              <li>StretchImage</li>
              <li>AutoSize</li>
              <li>CenterImage</li>
              <li>Zoom</li>
            </ul>
          </div>
          <div class="vscroll pg-scroll"><b class="up"></b><i class="thumb"></i><b class="down"></b></div>
        </div>
        <div class="prop-cmd"><a>选择图像...</a></div>
        <div class="prop-desc">
          <strong>SizeMode</strong>
          <p>控制 PictureBox 将如何处理图像位置和控件大小。</p>
        </div>
      </div>
    </section>

    <aside class="strip strip-right"><span class="vtext">诊断工具</span></aside>
  </main>

  <footer class="statusbar">
    <svg class="st-ic" viewBox="0 0 16 12"><path d="M4 1h11l-3 10H1z"/></svg>
    <span>就绪</span>
    <div class="st-right">
      <svg class="st-up" viewBox="0 0 12 14"><path d="M6 13V2M1.500 6 6 1.500 10.500 6"/></svg>
      <span>添加到源代码管理</span>
      <b class="caret"></b>
      <span class="bell">
        <svg viewBox="0 0 14 16"><path d="M7 1a4 4 0 0 1 4 4v4l2 3H1l2-3V5a4 4 0 0 1 4-4zM5 13h4v2H5z"/></svg>
        <i class="badge">2</i>
      </span>
    </div>
  </footer>
  <div class="taskbar"><i class="task-white"></i><i class="task-gray"></i><span class="clock">21:18</span></div>

  <!-- annotations drawn on top of the screenshot -->
  <svg class="arrows" viewBox="0 0 1920 1048">
    <polygon points="412,624 518.500,404.600 521,410 523,389 508,404 513.700,402.400 411,623"/>
    <polygon points="1338,698 1691,823 1690,818 1703,832 1685,834 1688,829"/>
  </svg>
  <div class="note note1"><i class="num">1</i><span class="bubble">右键Picturebox控件属性，找到行为中的SizeMode属性</span></div>
  <div class="note note2"><i class="num">2</i><span class="bubble">选择符合图片合适的属性即可</span></div>
</body>
</html>
```

FILE: styles.css
```css
* {
  margin: 0;
  padding: 0;
  box-sizing: border-box;
}
html, body {
  width: 1920px;
  height: 1048px;
  overflow: hidden;
}
body {
  position: relative;
  display: flex;
  flex-direction: column;
  background: #2d2d30;
  color: #dcdcdc;
  font-family: "Noto Sans", "Noto Sans CJK SC", sans-serif;
  font-size: 12px;
  line-height: 16px;
}
ul {
  list-style: none;
}
i, em {
  font-style: normal;
}
.sprites {
  position: absolute;
}
svg {
  fill: none;
  stroke: currentColor;
  flex: none;
}

/* title bar */
.titlebar {
  height: 33px;
  display: flex;
  align-items: center;
  flex: none;
}
.vslogo {
  width: 21px;
  height: 18px;
  margin-left: 12px;
  fill: #68686c;
  stroke: none;
}
.menu {
  display: flex;
  margin-left: 0;
  color: #e8e8e8;
}
.menu span {
  padding: 0 10.500px;
  white-space: nowrap;
}
.quick {
  width: 220px;
  height: 22px;
  margin-left: 15px;
  padding: 0 6px;
  background: #333337;
  border: 1px solid #434346;
  display: flex;
  align-items: center;
  justify-content: space-between;
  color: #999;
}
.i16 {
  width: 14px;
  height: 16px;
}
.white {
  color: #f1f1f1;
}
.solname {
  height: 26px;
  margin-left: 17px;
  width: 238px;
  background: #252526;
  color: #999;
  font-weight: 700;
  line-height: 26px;
  text-align: center;
  white-space: nowrap;
}
.avatar {
  width: 21px;
  height: 22px;
  margin-left: 502px;
  border-radius: 50%;
  background: #5a0f60;
  color: #f1f1f1;
  font-size: 14px;
  line-height: 22px;
  text-align: center;
}
.winctl {
  display: flex;
  gap: 35px;
  margin-left: 35px;
  color: #6f6f72;
}
.winctl svg {
  width: 12px;
  height: 12px;
}

/* toolbar */
.toolbar {
  height: 27px;
  padding-left: 12px;
  display: flex;
  align-items: center;
  flex: none;
}
.gripv {
  width: 3px;
  height: 19px;
  margin-right: 6px;
  background: radial-gradient(circle, #55555a .8px, transparent 1px) 0 0/3px 3px;
}
.gripv.small {
  margin: 0 5px 0 1px;
}
.ic {
  width: 22px;
  height: 16px;
  color: #c8c8c8;
}
.blue {
  color: #75bfff;
}
.green {
  color: #8cc265;
}
.faded {
  color: #5a5a5e;
}
.off {
  color: #5f5f63;
  stroke-width: 1;
}
.flip {
  transform: scaleX(-1);
}
.flipv {
  transform: scaleY(-1);
}
.dd {
  display: inline-block;
  width: 12px;
  height: 3px;
  position: relative;
  flex: none;
}
.dd::after {
  content: "";
  position: absolute;
  left: 3px;
  top: 0;
  border: 3px solid transparent;
  border-top: 3px solid #a8a8a8;
  border-bottom: 0;
}
.dd.dim::after {
  border-top-color: #5f5f63;
}
.dd.light::after {
  border: 4px solid transparent;
  border-top: 4px solid #e8e8e8;
  border-bottom: 0;
  left: 2px;
}
.ddlow {
  width: 10px;
  height: 10px;
  margin-top: 8px;
  border-top: 1px solid #a0a0a0;
  position: relative;
  flex: none;
}
.ddlow::after {
  content: "";
  position: absolute;
  left: 2px;
  top: 3px;
  border: 3px solid transparent;
  border-top: 3px solid #a0a0a0;
  border-bottom: 0;
}
.sep {
  width: 1px;
  height: 21px;
  margin: 0 4px;
  background: #3f3f42;
  flex: none;
}
.combo {
  height: 23px;
  background: #333337;
  border: 1px solid #434346;
  display: flex;
  align-items: center;
  justify-content: space-between;
  padding-left: 3px;
  color: #f1f1f1;
}
.debug {
  width: 64px;
  margin-left: 3px;
}
.cpu {
  width: 109px;
  margin-left: 7px;
  margin-right: 5px;
}
.runlbl {
  margin-left: 1px;
  margin-right: 3px;
  color: #f1f1f1;
}
.liveshare {
  margin-left: auto;
  display: flex;
  align-items: center;
  color: #dcdcdc;
  padding-right: 20px;
}
.liveshare span {
  margin-left: 4px;
}
.feed {
  margin-left: 25px;
  width: 16px;
}

/* main area */
.workspace {
  height: 955px;
  display: flex;
  padding-top: 12px;
  flex: none;
}
.strip {
  width: 32px;
  position: relative;
  flex: none;
}
.vtext {
  position: absolute;
  top: 0;
  left: 10px;
  writing-mode: vertical-rl;
  text-orientation: sideways;
  color: #cfcfcf;
  line-height: 14px;
}
.strip-mark {
  position: absolute;
  left: 0;
  top: -2px;
  width: 6px;
  height: 38px;
  background: #3f3f46;
}
.strip-right .vtext {
  left: 9px;
}
.toolbox {
  width: 199px;
  margin-bottom: 7px;
  display: flex;
  flex-direction: column;
  flex: none;
}
.panel {
  border: 1px solid #3f3f46;
  border-bottom: 0;
  flex: 1;
  display: flex;
  flex-direction: column;
  min-height: 0;
}
.ptitle {
  height: 24px;
  display: flex;
  align-items: center;
  padding: 0 7px 0 4px;
  flex: none;
  white-space: nowrap;
  color: #d8d8d8;
}
.dots {
  flex: 1;
  height: 7px;
  margin: 0 8px;
  background: radial-gradient(circle, #46464b .7px, transparent .9px) 0 0/3px 3px;
}
.pinic {
  width: 10px;
  height: 14px;
  margin: 0 8px 0 5px;
  color: #f1f1f1;
}
.xic {
  width: 10px;
  height: 10px;
  color: #f1f1f1;
}
.psearch {
  height: 22px;
  background: #333337;
  display: flex;
  align-items: center;
  padding-left: 4px;
  color: #8a8a8a;
  flex: none;
  white-space: nowrap;
}
.psearch span {
  flex: 1;
  overflow: hidden;
}
.psearch .dd {
  width: 13px;
  margin-left: 2px;
}
.tlist-wrap {
  flex: 1;
  display: flex;
  min-height: 0;
  margin-top: 2px;
}
.tlist {
  flex: 1;
  background: #252526;
  overflow: hidden;
  color: #dcdcdc;
  letter-spacing: .15px;
}
.tlist li {
  height: 22px;
  display: flex;
  align-items: center;
  padding-left: 22px;
  white-space: nowrap;
}
.tlist li.thead {
  padding-left: 10px;
  color: #e0e0e0;
}
.ic16 {
  width: 16px;
  height: 16px;
  margin-right: 15px;
  color: #c8c8c8;
}
.tri {
  width: 0;
  height: 0;
  border-style: solid;
  border-width: 0 0 6px 6px;
  border-color: transparent transparent #e8e8e8 transparent;
  margin-right: 5px;
  flex: none;
}

/* scrollbars */
.vscroll {
  width: 18px;
  background: #3e3e42;
  position: relative;
  flex: none;
}
.vscroll .thumb {
  position: absolute;
  left: 4px;
  width: 9px;
  background: #686868;
}
.vscroll .up, .vscroll .down {
  position: absolute;
  left: 4px;
  width: 0;
  height: 0;
  border: 5px solid transparent;
}
.vscroll .up {
  top: 5px;
  border-top: 0;
  border-bottom: 5px solid #999;
}
.vscroll .down {
  bottom: 5px;
  border-bottom: 0;
  border-top: 5px solid #999;
}
.tb-scroll .thumb {
  top: 18px;
  height: 69px;
}
.hscroll {
  height: 16px;
  background: #3e3e42;
  display: flex;
  align-items: center;
  flex: none;
}
.hscroll .left, .hscroll .right {
  width: 0;
  height: 0;
  border: 5px solid transparent;
  flex: none;
}
.hscroll .left {
  border-left: 0;
  border-right: 5px solid #999;
  margin-left: 6px;
}
.hscroll .right {
  border-right: 0;
  border-left: 5px solid #999;
}
.hscroll .track {
  flex: 1;
}
.hscroll .thumb {
  display: block;
  height: 8px;
  background: #686868;
}

/* bottom tabs of a dock */
.dock-tabs {
  height: 21px;
  display: flex;
  flex: none;
  color: #d0d0d0;
  white-space: nowrap;
}
.dock-tabs span {
  padding: 0 6px;
  line-height: 20px;
  margin-right: 0;
}
.dock-tabs .on {
  color: #0097fb;
  background: #252526;
  border: 1px solid #3f3f46;
  border-top: 0;
  padding: 0 5px;
}

/* documents */
.center {
  width: 1296px;
  margin: 0 8px 0 6px;
  display: flex;
  flex-direction: column;
  flex: none;
}
.doc-tabs {
  height: 23px;
  display: flex;
  align-items: center;
  border-bottom: 2px solid #3f3f46;
  flex: none;
  color: #f1f1f1;
  white-space: nowrap;
}
.doc-tab {
  padding: 0 6px;
  width: 106px;
}
.doc-tab.active {
  width: 139px;
  height: 21px;
  background: #3a3a3f;
  padding: 0 5px;
  display: flex;
  align-items: center;
  color: #e8e8e8;
}
.tabpin {
  width: 10px;
  height: 10px;
  margin-left: 12px;
  color: #77777c;
}
.tabx {
  width: 10px;
  height: 10px;
  margin-left: 8px;
  color: #77777c;
}
.doc-right {
  margin-left: auto;
  display: flex;
  align-items: center;
  padding-right: 0;
}
.doc-right .dd {
  width: 12px;
  margin-right: 6px;
}
.gearic {
  width: 12px;
  height: 12px;
  margin-right: 0;
  color: #e8e8e8;
}
.surface {
  height: 700px;
  background: #1c1c1c;
  padding: 16px 0 0 16px;
  flex: none;
}
.form {
  width: 816px;
  height: 487px;
  background: #cfdeee;
  border: 1px solid #8d939a;
  border-bottom-color: #4a4a4a;
  border-radius: 4px 4px 0 0;
  display: flex;
  flex-direction: column;
  padding: 0 4px 4px 4px;
}
.form-title {
  height: 27px;
  flex: none;
  display: flex;
  align-items: center;
  margin: 0 -4px;
  padding: 4px 9px 0 10px;
  background: linear-gradient(#b8c8d6, #cfdeee);
  color: #a0a6ae;
  font-size: 13px;
  border-radius: 3px 3px 0 0;
}
.formico {
  width: 14px;
  height: 14px;
  margin-right: 5px;
}
.form-btns {
  margin-left: auto;
  display: flex;
  gap: 2px;
}
.form-btns span {
  width: 32px;
  height: 18px;
  border: 1px solid #8f9bab;
  border-radius: 2px;
  background: #c3d2e2;
  display: flex;
  align-items: center;
  justify-content: center;
}
.form-btns svg {
  width: 12px;
  height: 12px;
  color: #3a4048;
}
.form-btns svg path {
  stroke-width: 1.400;
}
.form-btns svg .xout {
  stroke-width: 3.600;
  stroke: #5a6068;
}
.form-btns svg .xin {
  stroke-width: 2;
  stroke: #f4f4f4;
}
.form-sel {
  flex: 1;
  position: relative;
  border: 1px dotted #555;
  padding: 2px;
  margin-top: 0;
}
.form-client {
  height: 100%;
  background: #f0f0f0;
  border: 1px dashed #7f7f7f;
}
.handle {
  position: absolute;
  left: -3px;
  top: -3px;
  width: 6px;
  height: 6px;
  background: #fff;
  border: 1px solid #000;
}
.smart {
  position: absolute;
  right: 8px;
  top: -6px;
  width: 9px;
  height: 12px;
  background: #fff linear-gradient(#000, #000) no-repeat 3px 3px/3px 6px;
  border: 1px solid #999;
  border-radius: 1px;
}

/* output */
.output {
  height: 187px;
  margin-top: 5px;
  border-top: 1px solid #3f3f46;
  display: flex;
  flex-direction: column;
  flex: none;
}
.out-title {
  height: 25px;
  padding-left: 7px;
}
.out-tools {
  height: 25px;
  display: flex;
  align-items: center;
  padding-left: 8px;
  flex: none;
}
.out-tools .sep {
  margin: 0 3px;
}
.out-lbl {
  width: 96px;
  color: #e0e0e0;
  white-space: nowrap;
}
.out-src {
  width: 300px;
  height: 22px;
  padding-left: 3px;
  margin-right: 5px;
}
.out-body {
  height: 121px;
  display: flex;
  flex: none;
  background: #252526;
  overflow: hidden;
}
.out-text {
  width: 1277px;
  margin-top: -1px;
  padding: 0 0 0 13px;
  overflow: hidden;
  font-family: "Liberation Mono", monospace;
  letter-spacing: -1.200px;
  line-height: 15px;
  color: #dcdcdc;
  white-space: nowrap;
}
.ln {
  height: 15px;
}
.c {
  font-family: "Noto Sans CJK SC", sans-serif;
  letter-spacing: 0;
}
.out-scroll {
  width: 19px;
}
.out-scroll .thumb {
  left: 4px;
  top: 23px;
  height: 39px;
  width: 11px;
  border-bottom: 2px solid #e8e8e8;
}
.out-h {
  padding-right: 23px;
}
.out-h .track {
  margin-left: 6px;
  padding-right: 475px;
}

/* right column */
.rightcol {
  width: 347px;
  display: flex;
  flex-direction: column;
  flex: none;
}
.se {
  height: 441px;
  flex: none;
  border-bottom: 0;
}
.se .ptitle {
  height: 24px;
  padding-right: 9px;
}
.se-tools {
  height: 26px;
  padding-left: 3px;
  display: flex;
  align-items: center;
  flex: none;
}
.boxed {
  height: 24px;
  width: 23px;
  display: flex;
  align-items: center;
  justify-content: center;
  border: 1px solid #3399ff;
  flex: none;
}
.se-search {
  margin-top: 2px;
}
.tree {
  flex: 1;
  background: #252526;
  overflow: hidden;
  padding-top: 3px;
  color: #dcdcdc;
}
.node {
  height: 19px;
  display: flex;
  align-items: center;
  white-space: nowrap;
  position: relative;
}
.node.sel {
  background: #3f3f46;
  font-weight: 700;
  color: #f1f1f1;
}
.l1 {
  padding-left: 13px;
}
.node.l1.sel {
  padding-left: 11px;
}
.l2 {
  padding-left: 49px;
}
.l3 {
  padding-left: 67px;
}
.nic {
  width: 16px;
  height: 16px;
  margin-right: 5px;
  margin-left: 0;
  color: #dcdcdc;
}
.node .tri {
  position: absolute;
  margin: 0;
}
.node.sel .tri {
  left: 11px;
  top: 7px;
}
.node.l2 .tri {
  left: 28px;
  top: 7px;
}
.node.sel .nic {
  margin-left: 19px;
  margin-right: 5px;
}
.exp {
  position: absolute;
  width: 6px;
  height: 10px;
  top: 5px;
}
.l2 .exp {
  left: 28px;
}
.l3 .exp {
  left: 46px;
}
.cs {
  font-family: "Liberation Mono", monospace;
  font-size: 9px;
  font-weight: 700;
  color: #dcdcdc;
  position: absolute;
  left: 33px;
  letter-spacing: -1px;
}
.cs.plain {
  position: static;
  color: #8cc265;
  font-size: 11px;
  width: 21px;
}
.node.l1:first-child span {
  overflow: hidden;
}
.se-h {
  height: 18px;
  padding-right: 4px;
}
.se-h .track {
  margin-left: 5px;
  padding-right: 44px;
  margin-right: 6px;
}
.se-tabs {
  height: 20px;
  flex: none;
}
.props {
  margin-top: 8px;
  flex: 1;
  border: 1px solid #3f3f46;
  border-top: 0;
  display: flex;
  flex-direction: column;
  min-height: 0;
}
.props-title {
  height: 23px;
  background: #007acc;
  color: #fff;
  margin: 0 -1px;
  padding: 0 9px 0 5px;
}
.props-title .dots {
  background-image: radial-gradient(circle, #5cb0e6 .7px, transparent .9px);
}
.props-obj {
  height: 24px;
  display: flex;
  align-items: center;
  padding-left: 5px;
  flex: none;
  border-bottom: 1px solid #3f3f46;
}
.props-obj strong {
  margin-right: 8px;
  color: #f1f1f1;
}
.props-obj .dd {
  margin-left: auto;
}
.props-obj .dd::after {
  border-width: 3px;
  border-top-width: 3px;
  border-bottom: 0;
}
.props-tools {
  height: 27px;
  padding-left: 2px;
  display: flex;
  align-items: center;
  flex: none;
}
.props-tools .sep {
  margin: 0 3px;
}
.pgrid-wrap {
  height: 294px;
  display: flex;
  flex: none;
}
.pgrid {
  width: 327px;
  padding-top: 2px;
  position: relative;
  flex: none;
}
.row {
  height: 19px;
  display: grid;
  grid-template-columns: 152px 1fr;
  margin-left: 15px;
  background: #252526;
  border-bottom: 1px solid #2d2d30;
  position: relative;
  line-height: 18px;
  color: #dcdcdc;
}
.row > span {
  padding-left: 3px;
  white-space: nowrap;
  overflow: hidden;
}
.row > span + span {
  border-left: 1px solid #2d2d30;
  padding-left: 2px;
}
.row.sel > span:first-child {
  background: #3399ff;
  color: #e8f3ff;
}
.group {
  height: 19px;
  padding-left: 18px;
  font-weight: 700;
  color: #e8e8e8;
  line-height: 19px;
  position: relative;
}
.pm {
  position: absolute;
  width: 9px;
  height: 9px;
  border: 1px solid #dcdcdc;
  background:
    linear-gradient(#dcdcdc, #dcdcdc) no-repeat center/5px 1px;
}
.group .pm {
  left: 3px;
  top: 5px;
}
.row .pm {
  left: -12px;
  top: 5px;
  background:
    linear-gradient(#dcdcdc, #dcdcdc) no-repeat center/5px 1px,
    linear-gradient(#dcdcdc, #dcdcdc) no-repeat center/1px 5px;
}
.imgval {
  display: flex;
  align-items: center;
}
.swatch {
  width: 20px;
  height: 15px;
  border: 1px solid #000;
  margin-right: 8px;
}
.combo-btn {
  position: absolute;
  right: 0;
  top: 0;
  width: 17px;
  height: 18px;
  background: #e8e8e8;
  border: 1px solid #bbb;
  display: flex;
  align-items: center;
  justify-content: center;
  color: #333;
}
.combo-btn svg {
  width: 10px;
  height: 6px;
}
.dropdown {
  position: absolute;
  left: 165px;
  top: 171px;
  width: 162px;
  height: 112px;
  background: #252526;
  border: 1px solid #8a8a8a;
  padding-top: 1px;
  color: #e0e0e0;
}
.dropdown li {
  height: 20px;
  line-height: 20px;
  padding-left: 2px;
}
.dropdown .on {
  background: #3399ff;
}
.pg-scroll {
  width: 18px;
  flex: none;
}
.pg-scroll .thumb {
  top: 179px;
  height: 98px;
}
.pg-scroll .up {
  top: 6px;
}
.pg-scroll .down {
  bottom: 6px;
}
.prop-cmd {
  height: 34px;
  border-top: 1px solid #3f3f46;
  padding: 8px 0 0 6px;
  flex: none;
}
.prop-cmd a {
  color: #0097fb;
  text-decoration: underline;
}
.prop-desc {
  padding: 7px 0 0 6px;
  flex: 1;
  color: #dcdcdc;
}
.prop-desc strong {
  display: block;
  line-height: 18px;
  color: #e8e8e8;
}
.prop-desc p {
  line-height: 20px;
}

/* status bar */
.statusbar {
  height: 25px;
  background: #007acc;
  color: #fff;
  display: flex;
  align-items: center;
  padding-left: 4px;
  flex: none;
}
.st-ic {
  width: 16px;
  height: 12px;
  margin-right: 8px;
  stroke-width: 1.200;
}
.st-right {
  margin-left: auto;
  display: flex;
  align-items: center;
  padding-right: 22px;
}
.st-up {
  width: 12px;
  height: 14px;
  margin-right: 9px;
  stroke-width: 2;
}
.caret {
  width: 0;
  height: 0;
  border: 4px solid transparent;
  border-top: 0;
  border-bottom: 4px solid #fff;
  margin: 0 21px 0 6px;
}
.bell {
  position: relative;
  width: 16px;
  height: 18px;
}
.bell svg {
  width: 14px;
  height: 16px;
  fill: #cfe3f3;
  stroke: none;
}
.badge {
  position: absolute;
  left: 8px;
  top: 5px;
  width: 12px;
  height: 12px;
  border-radius: 50%;
  background: #e51400;
  color: #fff;
  font-size: 10px;
  line-height: 12px;
  text-align: center;
}
.taskbar {
  height: 8px;
  background: #1f1f1f;
  display: flex;
  overflow: hidden;
  flex: none;
}
.task-white {
  width: 344px;
  margin-left: 48px;
  background: #f3f3f3;
}
.task-gray {
  width: 48px;
  margin-left: 120px;
  background: #3b3b3b;
}
.clock {
  margin-left: auto;
  margin-right: 74px;
  padding-top: 4px;
  color: #e8e8e8;
  line-height: 12px;
}

/* annotations */
.arrows {
  position: absolute;
  left: 0;
  top: 0;
  width: 1920px;
  height: 1048px;
  pointer-events: none;
}
.arrows polygon {
  fill: #f5393b;
  stroke: none;
}
.note {
  position: absolute;
  display: flex;
  align-items: center;
}
.note1 {
  left: 397px;
  top: 615px;
}
.note2 {
  left: 1293px;
  top: 655px;
}
.num {
  width: 20px;
  height: 20px;
  border-radius: 50%;
  background: #f5393b;
  color: #fff;
  font-size: 12px;
  line-height: 20px;
  text-align: center;
  margin-right: 9px;
  flex: none;
}
.bubble {
  position: relative;
  height: 34px;
  padding: 0 12px 0 6px;
  background: #0c0c0c;
  border-radius: 3px;
  color: #f4f4f4;
  font-family: "Noto Sans CJK SC", sans-serif;
  font-size: 16px;
  line-height: 34px;
  letter-spacing: .15px;
  white-space: nowrap;
}
.note2 .bubble {
  padding: 0 9px 0 7px;
  letter-spacing: 0;
}
.note2 .num {
  margin-right: 7px;
}
.bubble::before {
  content: "";
  position: absolute;
  left: -5px;
  top: 12px;
  border: 5px solid transparent;
  border-left: 0;
  border-right: 5px solid #0c0c0c;
}
```
